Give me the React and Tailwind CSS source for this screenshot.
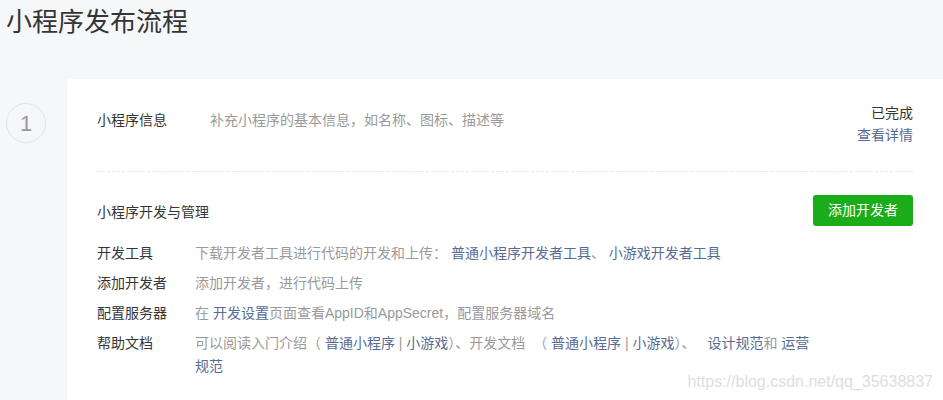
const link = 'text-[#576b95]'

function Row({ label, children }) {
  return (
    <div className="flex">
      <div className="w-[98px] shrink-0 text-[#353535]">{label}</div>
      <div className="w-[618px] text-[#9a9a9a]">{children}</div>
    </div>
  )
}

export default function App() {
  return (
    <div
      className="relative h-[400px] overflow-hidden bg-[#f6f7f9] text-[14px] leading-[23px]"
      style={{ fontFamily: '"Liberation Sans", "Noto Sans CJK SC", sans-serif' }}
    >
      <h1 className="pl-[6px] pt-[6px] text-[26px] leading-[32px] font-normal text-[#353535]">
        小程序发布流程
      </h1>

      <div className="mt-[41px] flex">
        {/* step marker */}
        <div className="w-[67px] shrink-0 pl-[6px] pt-[24px]">
          <div className="flex h-10 w-10 items-center justify-center rounded-full border border-[#e3e3e3] text-[22px] font-light text-[#9a9a9a]">
            1
          </div>
        </div>

        {/* card */}
        <div className="h-[400px] flex-1 rounded-tl-[4px] bg-white px-[30px] pt-[23px]">
          <div className="flex justify-between border-b border-dashed border-[#e6e6e6] pb-[25px]">
            <div className="flex pt-[7px]">
              <div className="w-[113px] text-[#353535]">小程序信息</div>
              <div className="text-[#9a9a9a]">补充小程序的基本信息，如名称、图标、描述等</div>
            </div>
            <div className="flex flex-col items-end leading-[22px]">
              <span className="text-[#353535]">已完成</span>
              <span className={link}>查看详情</span>
            </div>
          </div>

          <div className="mt-[23px] flex items-center justify-between">
            <span className="pt-[3px] text-[#353535]">小程序开发与管理</span>
            <button className="h-[31px] w-[100px] rounded-[3px] bg-[#1aad19] text-[14px] text-white">
              添加开发者
            </button>
          </div>

          <div className="mt-[16px] flex flex-col gap-[7px]">
            <Row label="开发工具">
              下载开发者工具进行代码的开发和上传：{' '}
              <span className={link}>普通小程序开发者工具</span>、{' '}
              <span className={link}>小游戏开发者工具</span>
            </Row>
            <Row label="添加开发者">添加开发者，进行代码上传</Row>
            <Row label="配置服务器">
              在 <span className={link}>开发设置</span>页面查看AppID和AppSecret，配置服务器域名
            </Row>
            <Row label="帮助文档">
              可以阅读入门介绍（ <span className={link}>普通小程序</span> |{' '}
              <span className={link}>小游戏</span>）、开发文档 <span className="pl-[4px]">（</span>{' '}
              <span className={link}>普通小程序</span> | <span className={link}>小游戏</span>）、{' '}
              <span className="pl-[8px] text-[#576b95]">设计规范</span>和 <span className={link}>运营规范</span>
            </Row>
          </div>
        </div>
      </div>

      {/* watermark */}
      <div className="absolute right-[10px] top-[372px] text-[16px] leading-[20px] text-[#dedede]">
        https://blog.csdn.net/qq_35638837
      </div>
    </div>
  )
}
